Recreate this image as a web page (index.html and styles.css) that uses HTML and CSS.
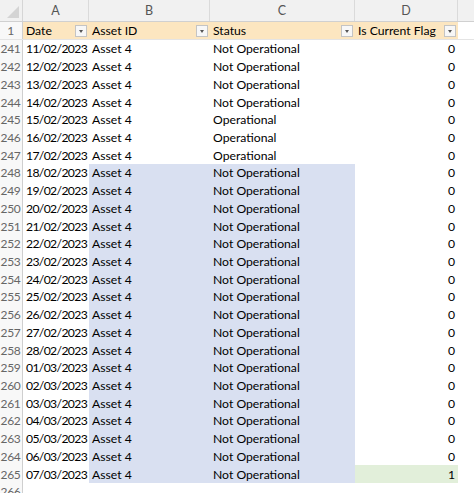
FILE: index.html
```html
<!DOCTYPE html>
<html>
<head>
<meta charset="utf-8">
<link rel="stylesheet" href="styles.css">
</head>
<body>
<div class="sheet">
  <div class="row colhead">
    <div class="corner"><span class="tri"></span></div>
    <div class="ch">A</div>
    <div class="ch">B</div>
    <div class="ch">C</div>
    <div class="ch">D</div>
    <div class="ch last"></div>
  </div>
  <div class="row hdr">
    <div class="rn">1</div>
    <div class="c h"><span>Date</span><span class="fb"></span></div>
    <div class="c h"><span>Asset ID</span><span class="fb"></span></div>
    <div class="c h"><span>Status</span><span class="fb"></span></div>
    <div class="c h"><span>Is Current Flag</span><span class="fb"></span></div>
    <div class="c"></div>
  </div>
  <div class="row"><div class="rn">241</div><div class="c d">11/02/2023</div><div class="c">Asset 4</div><div class="c">Not Operational</div><div class="c n">0</div><div class="c"></div></div>
  <div class="row"><div class="rn">242</div><div class="c d">12/02/2023</div><div class="c">Asset 4</div><div class="c">Not Operational</div><div class="c n">0</div><div class="c"></div></div>
  <div class="row"><div class="rn">243</div><div class="c d">13/02/2023</div><div class="c">Asset 4</div><div class="c">Not Operational</div><div class="c n">0</div><div class="c"></div></div>
  <div class="row"><div class="rn">244</div><div class="c d">14/02/2023</div><div class="c">Asset 4</div><div class="c">Not Operational</div><div class="c n">0</div><div class="c"></div></div>
  <div class="row"><div class="rn">245</div><div class="c d">15/02/2023</div><div class="c">Asset 4</div><div class="c">Operational</div><div class="c n">0</div><div class="c"></div></div>
  <div class="row"><div class="rn">246</div><div class="c d">16/02/2023</div><div class="c">Asset 4</div><div class="c">Operational</div><div class="c n">0</div><div class="c"></div></div>
  <div class="row"><div class="rn">247</div><div class="c d">17/02/2023</div><div class="c">Asset 4</div><div class="c">Operational</div><div class="c n">0</div><div class="c"></div></div>
  <div class="row"><div class="rn">248</div><div class="c d">18/02/2023</div><div class="c sel">Asset 4</div><div class="c sel">Not Operational</div><div class="c n">0</div><div class="c"></div></div>
  <div class="row"><div class="rn">249</div><div class="c d">19/02/2023</div><div class="c sel">Asset 4</div><div class="c sel">Not Operational</div><div class="c n">0</div><div class="c"></div></div>
  <div class="row"><div class="rn">250</div><div class="c d">20/02/2023</div><div class="c sel">Asset 4</div><div class="c sel">Not Operational</div><div class="c n">0</div><div class="c"></div></div>
  <div class="row"><div class="rn">251</div><div class="c d">21/02/2023</div><div class="c sel">Asset 4</div><div class="c sel">Not Operational</div><div class="c n">0</div><div class="c"></div></div>
  <div class="row"><div class="rn">252</div><div class="c d">22/02/2023</div><div class="c sel">Asset 4</div><div class="c sel">Not Operational</div><div class="c n">0</div><div class="c"></div></div>
  <div class="row"><div class="rn">253</div><div class="c d">23/02/2023</div><div class="c sel">Asset 4</div><div class="c sel">Not Operational</div><div class="c n">0</div><div class="c"></div></div>
  <div class="row"><div class="rn">254</div><div class="c d">24/02/2023</div><div class="c sel">Asset 4</div><div class="c sel">Not Operational</div><div class="c n">0</div><div class="c"></div></div>
  <div class="row"><div class="rn">255</div><div class="c d">25/02/2023</div><div class="c sel">Asset 4</div><div class="c sel">Not Operational</div><div class="c n">0</div><div class="c"></div></div>
  <div class="row"><div class="rn">256</div><div class="c d">26/02/2023</div><div class="c sel">Asset 4</div><div class="c sel">Not Operational</div><div class="c n">0</div><div class="c"></div></div>
  <div class="row"><div class="rn">257</div><div class="c d">27/02/2023</div><div class="c sel">Asset 4</div><div class="c sel">Not Operational</div><div class="c n">0</div><div class="c"></div></div>
  <div class="row"><div class="rn">258</div><div class="c d">28/02/2023</div><div class="c sel">Asset 4</div><div class="c sel">Not Operational</div><div class="c n">0</div><div class="c"></div></div>
  <div class="row"><div class="rn">259</div><div class="c d">01/03/2023</div><div class="c sel">Asset 4</div><div class="c sel">Not Operational</div><div class="c n">0</div><div class="c"></div></div>
  <div class="row"><div class="rn">260</div><div class="c d">02/03/2023</div><div class="c sel">Asset 4</div><div class="c sel">Not Operational</div><div class="c n">0</div><div class="c"></div></div>
  <div class="row"><div class="rn">261</div><div class="c d">03/03/2023</div><div class="c sel">Asset 4</div><div class="c sel">Not Operational</div><div class="c n">0</div><div class="c"></div></div>
  <div class="row"><div class="rn">262</div><div class="c d">04/03/2023</div><div class="c sel">Asset 4</div><div class="c sel">Not Operational</div><div class="c n">0</div><div class="c"></div></div>
  <div class="row"><div class="rn">263</div><div class="c d">05/03/2023</div><div class="c sel">Asset 4</div><div class="c sel">Not Operational</div><div class="c n">0</div><div class="c"></div></div>
  <div class="row"><div class="rn">264</div><div class="c d">06/03/2023</div><div class="c sel">Asset 4</div><div class="c sel">Not Operational</div><div class="c n">0</div><div class="c"></div></div>
  <div class="row"><div class="rn">265</div><div class="c d">07/03/2023</div><div class="c sel">Asset 4</div><div class="c sel">Not Operational</div><div class="c n cur">1</div><div class="c"></div></div>
  <div class="row"><div class="rn">266</div><div class="c"></div><div class="c"></div><div class="c"></div><div class="c"></div><div class="c"></div></div>
</div>
</body>
</html>
```
FILE: styles.css
```css
html, body {
  margin: 0;
  padding: 0;
  background: #ffffff;
  overflow: hidden;
}
.sheet {
  width: 474px;
  height: 493px;
  overflow: hidden;
  font-family: Lato, "Open Sans", sans-serif;
  font-size: 12.2px;
  color: #000;
}
.row {
  display: grid;
  grid-template-columns: 23px 66px 121px 145px 103px 1fr;
  height: 17.72px;
  align-items: center;
}
.colhead {
  height: 22px;
  background: #f1f1f1;
  border-bottom: 1px solid #d0d0d0;
  box-sizing: border-box;
  align-items: stretch;
}
.corner {
  position: relative;
  border-right: 1px solid #d6d6d6;
}
.tri {
  position: absolute;
  right: 3px;
  bottom: 3px;
  width: 0;
  height: 0;
  border-left: 12px solid transparent;
  border-bottom: 12px solid #d4d4d4;
}
.ch {
  display: flex;
  align-items: center;
  justify-content: center;
  color: #555;
  font-size: 12.5px;
  border-right: 1px solid #dadada;
}
.ch.last {
  border-right: none;
}
.hdr {
  height: 18px;
  border-bottom: 1px solid #e4e4e4;
  box-sizing: border-box;
}
.rn {
  height: 100%;
  display: flex;
  align-items: center;
  justify-content: center;
  color: #666;
  background: #f8f8f8;
  border-right: 1px solid #cfcfcf;
  box-sizing: border-box;
  padding-right: 1px;
  font-size: 12px;
  letter-spacing: -0.3px;
}
.c {
  height: 100%;
  display: flex;
  align-items: center;
  padding: 0 3px;
  white-space: nowrap;
  overflow: hidden;
  box-sizing: border-box;
}
.d {
  letter-spacing: -0.65px;
}
.h {
  background: #fce6c0;
  justify-content: space-between;
  padding-right: 2px;
}
.fb {
  position: relative;
  width: 12px;
  height: 12px;
  box-sizing: border-box;
  border: 1px solid #c4c4c4;
  background: #f7f7f7;
  flex: none;
}
.fb::after {
  content: "";
  position: absolute;
  left: 3px;
  top: 4px;
  border-left: 2.5px solid transparent;
  border-right: 2.5px solid transparent;
  border-top: 3px solid #555;
}
.n {
  justify-content: flex-end;
}
.sel {
  background: #d9e0f1;
}
.cur {
  background: #e2efda;
}
```
